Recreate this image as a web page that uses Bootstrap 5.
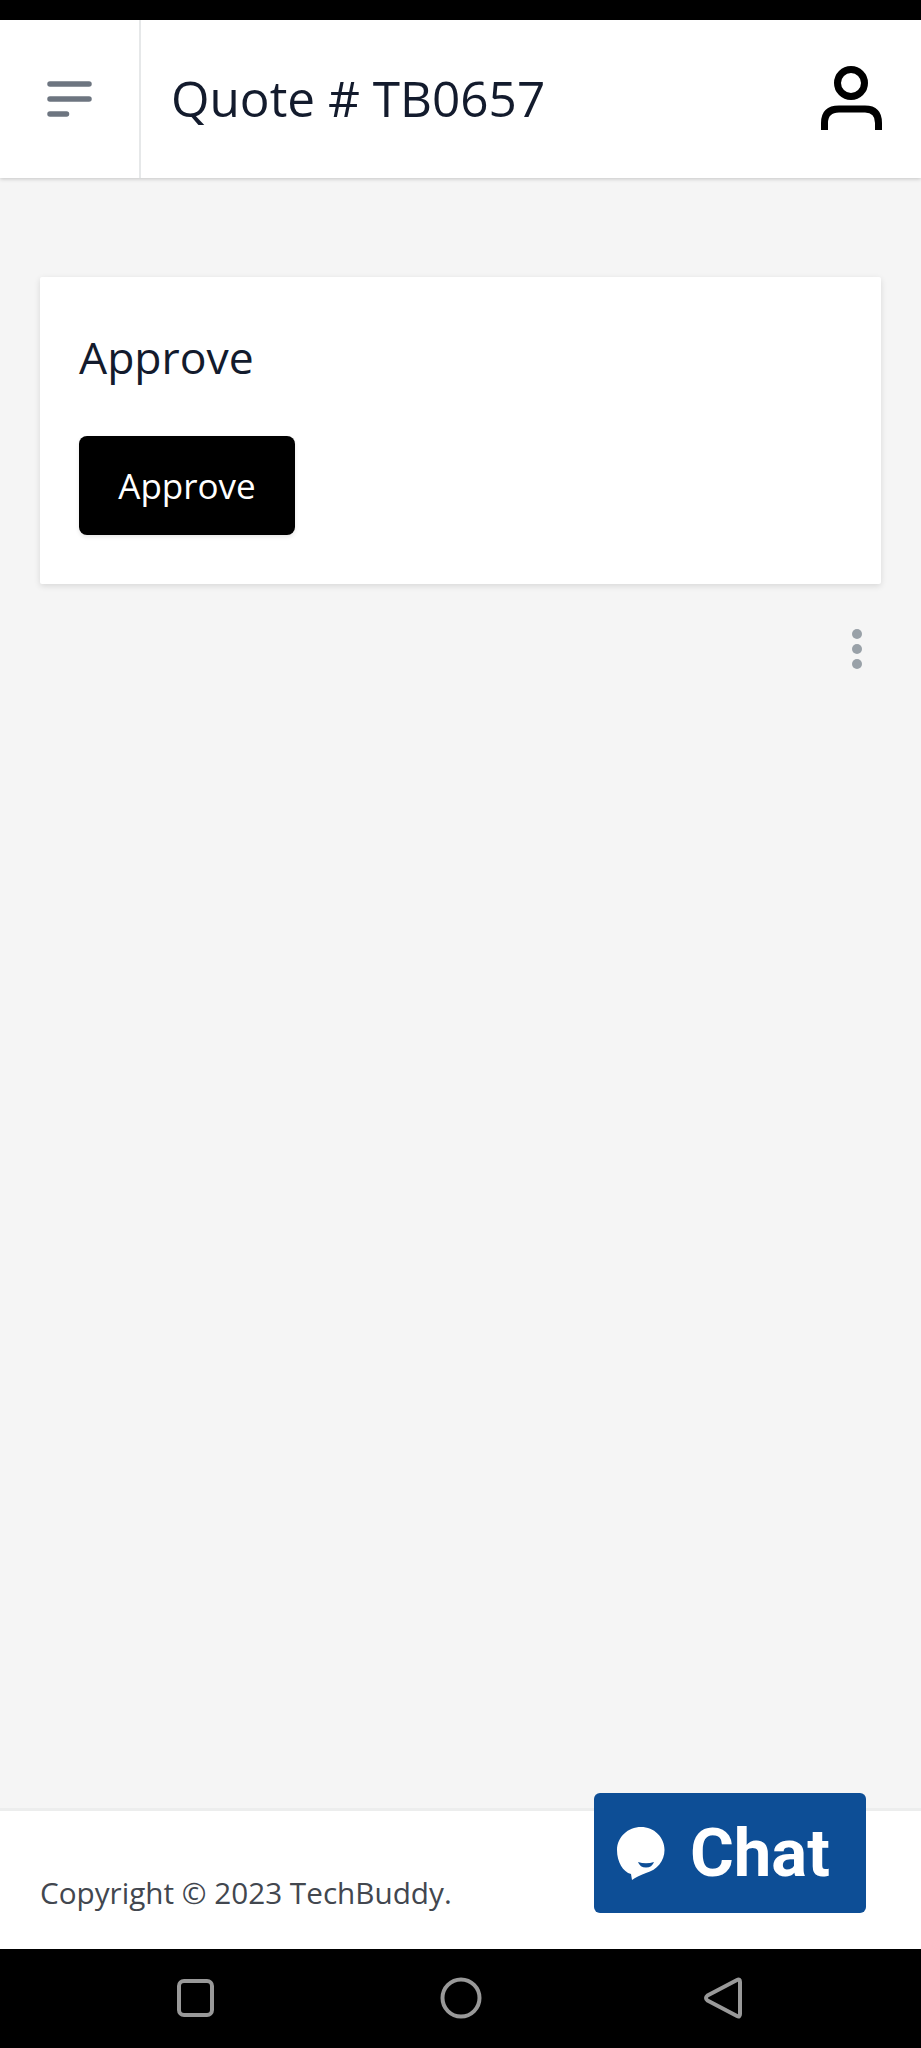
<!DOCTYPE html>
<html lang="en">
<head>
<meta charset="utf-8">
<title>Quote # TB0657</title>
<link href="https://cdn.jsdelivr.net/npm/bootstrap@5.3.0/dist/css/bootstrap.min.css" rel="stylesheet">
<style>
html,body{margin:0;height:2048px;overflow:hidden}
body{background:#f5f5f5;font-family:"Open Sans",sans-serif;color:#131b2d}
.shell{height:2048px;position:relative}
.status-strip{height:20px;background:#000;flex:none}
.top-head{height:158px;background:#fff;box-shadow:0 1px 4px rgba(0,0,0,.2);flex:none;position:relative}
.menu-cell{width:141px;border-right:2px solid #e6e8e9;padding-left:47px}
.menu-icon{display:block}
.head-title{font-size:49.5px;font-weight:400;margin:0 0 0 30px;line-height:1;color:#131b2d}
.user-icon{margin-right:39px;margin-top:-4px;display:block}
.main-area{padding:99px 40px 0 40px}
.approve-card{background:#fff;border:0;border-radius:2px;box-shadow:0 2px 6px rgba(0,0,0,.12);height:307px;padding:53px 39px 0}
.approve-title{font-size:44.5px;font-weight:400;line-height:1.2;margin:0 0 53px;color:#131b2d}
.approve-btn{width:216px;height:99px;background:#000;color:#fff;border:0;border-radius:8px;font-family:"Open Sans",sans-serif;font-size:35px;padding:0;box-shadow:0 2px 4px rgba(0,0,0,.1)}
.approve-btn:hover{background:#000;color:#fff}
.dots-row{padding:45px 19px 0 0}
.dots-icon{display:block}
.foot-bar{height:141px;background:#fff;border-top:3px solid #eceded;flex:none;padding:0 40px 38px;margin-top:auto}
.foot-text{font-size:29.7px;color:#42474f;line-height:1.2}
.nav-strip{height:99px;background:#000;flex:none;gap:221px;padding-bottom:1px}
.chat-widget{position:absolute;left:594px;top:1793px;width:272px;height:120px;background:#0d4e96;border-radius:6px;color:#fff;font-family:Roboto,sans-serif;font-weight:700;font-size:67px;line-height:1;padding-left:22px;gap:24px}
</style>
</head>
<body>
<div class="shell d-flex flex-column">
  <div class="status-strip"></div>
  <header class="top-head d-flex align-items-center">
    <div class="menu-cell h-100 d-flex align-items-center">
      <svg class="menu-icon" width="46" height="36" viewBox="0 0 46 36" aria-hidden="true"><g stroke="#6d7580" stroke-width="5.5" stroke-linecap="round"><path d="M3 3H42M3 18H42M3 33H19.500"/></g></svg>
    </div>
    <h1 class="head-title flex-grow-1">Quote # TB0657</h1>
    <svg class="user-icon" width="61" height="68" viewBox="0 0 61 68" aria-hidden="true"><g fill="none" stroke="#000" stroke-width="7"><circle cx="30" cy="20" r="13.5"/><path d="M3.5 67V60Q3.500 46 18 46H44Q57.500 46 57.500 60V67"/></g></svg>
  </header>
  <main class="main-area">
    <section class="card approve-card">
      <h2 class="approve-title">Approve</h2>
      <div><button type="button" class="btn approve-btn">Approve</button></div>
    </section>
    <div class="dots-row d-flex justify-content-end">
      <svg class="dots-icon" width="10" height="40" viewBox="0 0 10 40" aria-hidden="true"><g fill="#99a1a8"><circle cx="5" cy="5" r="5"/><circle cx="5" cy="20" r="5"/><circle cx="5" cy="35" r="5"/></g></svg>
    </div>
  </main>
  <footer class="foot-bar d-flex align-items-end">
    <span class="foot-text">Copyright © 2023 TechBuddy.</span>
  </footer>
  <nav class="nav-strip d-flex align-items-center justify-content-center">
    <svg width="44" height="44" viewBox="0 0 44 44" aria-hidden="true"><rect x="5" y="5" width="33" height="34" rx="5" fill="none" stroke="#999" stroke-width="4"/></svg>
    <svg width="44" height="44" viewBox="0 0 44 44" aria-hidden="true"><circle cx="22" cy="22" r="18.500" fill="none" stroke="#999" stroke-width="4"/></svg>
    <svg width="44" height="44" viewBox="0 0 44 44" aria-hidden="true"><path d="M35 6Q35 2.500 32 4L2.500 19.500Q-.5 22 2.500 24.500L32 40Q35 41.500 35 38Z" fill="none" stroke="#999" stroke-width="4" stroke-linejoin="round" transform="translate(1 0)"/></svg>
  </nav>
  <div class="chat-widget d-flex align-items-center">
    <svg width="50" height="56" viewBox="0 0 50 56" aria-hidden="true"><path d="M25 2C38 2 48.500 12 48.500 25C48.500 36 41 45 30 48C24 50 19 53 16 55L15 49C7 47 1 37 1 25C1 12 12 2 25 2Z" fill="#fff"/><path d="M22 37Q30 39.500 38 37Q36 42.500 30 42.500Q24 42.500 22 37Z" fill="#0d4e96"/></svg>
    <span>Chat</span>
  </div>
</div>
</body>
</html>
